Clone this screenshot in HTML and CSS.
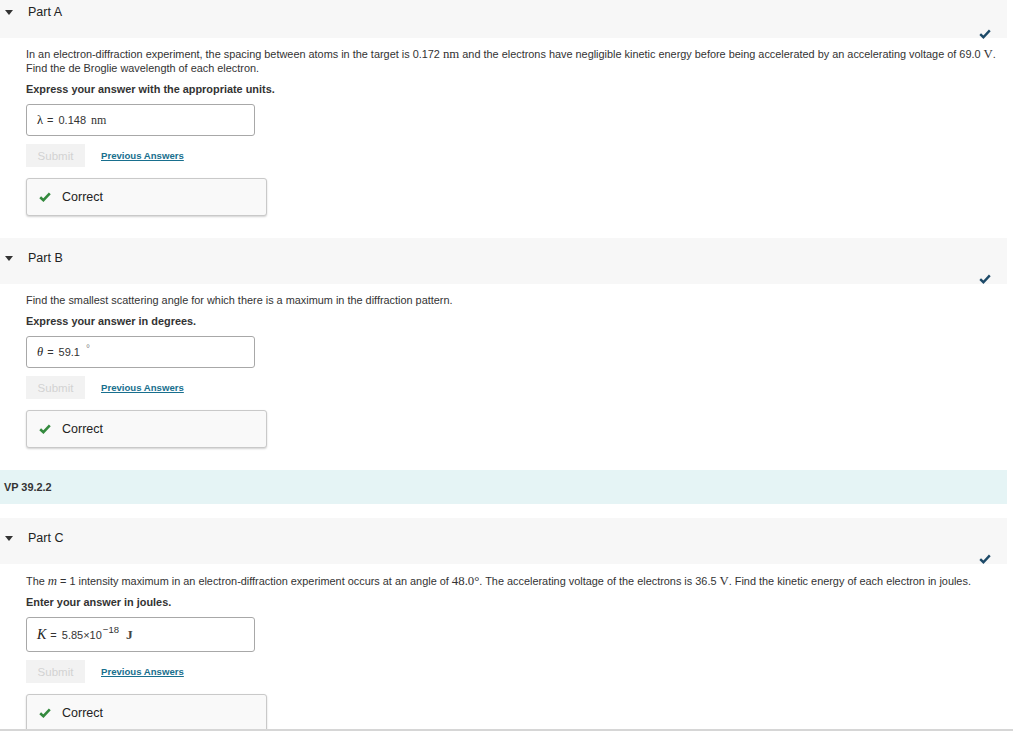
FILE: index.html
```html
<!DOCTYPE html>
<html>
<head>
<meta charset="utf-8">
<link rel="stylesheet" href="styles.css">
</head>
<body>
<div class="page">

  <section class="part part-first">
    <div class="part-head">
      <span class="caret"></span>
      <span class="part-title">Part A</span>
      <svg class="done" viewBox="0 0 12 10" width="12" height="10"><path d="M1.2 5.2 L4.4 8.2 L10.8 1.4" fill="none" stroke="#1d4a68" stroke-width="2.4"/></svg>
    </div>
    <div class="part-body">
      <p class="prompt">In an electron-diffraction experiment, the spacing between atoms in the target is 0.172 <span class="mj">nm</span> and the electrons have negligible kinetic energy before being accelerated by an accelerating voltage of 69.0 <span class="mj">V</span>.<br>Find the de Broglie wavelength of each electron.</p>
      <p class="instr">Express your answer with the appropriate units.</p>
      <div class="answer"><span class="mj sym">λ</span><span class="eq">=</span><span class="val">0.148</span><span class="mj unit">nm</span></div>
      <div class="actions"><span class="submit">Submit</span><a class="prev" href="#">Previous Answers</a></div>
      <div class="feedback"><svg class="ok" viewBox="0 0 12 10" width="12" height="10"><path d="M1.2 5.2 L4.4 8.2 L10.8 1.4" fill="none" stroke="#348a3e" stroke-width="2.6"/></svg><span>Correct</span></div>
    </div>
  </section>

  <section class="part">
    <div class="part-head">
      <span class="caret"></span>
      <span class="part-title">Part B</span>
      <svg class="done" viewBox="0 0 12 10" width="12" height="10"><path d="M1.2 5.2 L4.4 8.2 L10.8 1.4" fill="none" stroke="#1d4a68" stroke-width="2.4"/></svg>
    </div>
    <div class="part-body">
      <p class="prompt">Find the smallest scattering angle for which there is a maximum in the diffraction pattern.</p>
      <p class="instr">Express your answer in degrees.</p>
      <div class="answer"><span class="mj sym it">θ</span><span class="eq">=</span><span class="val">59.1</span><span class="deg">°</span></div>
      <div class="actions"><span class="submit">Submit</span><a class="prev" href="#">Previous Answers</a></div>
      <div class="feedback"><svg class="ok" viewBox="0 0 12 10" width="12" height="10"><path d="M1.2 5.2 L4.4 8.2 L10.8 1.4" fill="none" stroke="#348a3e" stroke-width="2.6"/></svg><span>Correct</span></div>
    </div>
  </section>

  <div class="vp">VP 39.2.2</div>

  <section class="part">
    <div class="part-head">
      <span class="caret"></span>
      <span class="part-title">Part C</span>
      <svg class="done" viewBox="0 0 12 10" width="12" height="10"><path d="M1.2 5.2 L4.4 8.2 L10.8 1.4" fill="none" stroke="#1d4a68" stroke-width="2.4"/></svg>
    </div>
    <div class="part-body">
      <p class="prompt prompt-math">The <span class="mj it">m</span> = 1 intensity maximum in an electron-diffraction experiment occurs at an angle of <span class="mj">48.0°</span>. The accelerating voltage of the electrons is 36.5 <span class="mj">V</span>. Find the kinetic energy of each electron in joules.</p>
      <p class="instr instr-tight">Enter your answer in joules.</p>
      <div class="answer answer-tall"><span class="mj sym it big">K</span><span class="eq">=</span><span class="val">5.85×10<sup>−18</sup></span><span class="mj unit unit-j">J</span></div>
      <div class="actions"><span class="submit">Submit</span><a class="prev" href="#">Previous Answers</a></div>
      <div class="feedback"><svg class="ok" viewBox="0 0 12 10" width="12" height="10"><path d="M1.2 5.2 L4.4 8.2 L10.8 1.4" fill="none" stroke="#348a3e" stroke-width="2.6"/></svg><span>Correct</span></div>
    </div>
  </section>

</div>
<div class="bottom-rule"></div>
</body>
</html>
```
FILE: styles.css
```css
html, body {
  margin: 0;
  padding: 0;
  background: #ffffff;
}
body {
  font-family: "Liberation Sans", Arial, sans-serif;
  color: #333333;
  overflow: hidden;
}
.page {
  width: 1007px;
}
.part {
  margin-bottom: 22px;
}
.part-first {
  margin-top: -8px;
}
.part-first .done {
  bottom: -1px;
}
.part-head {
  position: relative;
  height: 46px;
  background: #f7f7f7;
  display: flex;
  align-items: flex-start;
  padding-top: 12px;
  box-sizing: border-box;
}
.caret {
  width: 0;
  height: 0;
  margin: 6px 0 0 5px;
  border-left: 4px solid transparent;
  border-right: 4px solid transparent;
  border-top: 5px solid #333333;
}
.part-title {
  margin-left: 15px;
  font-size: 12.5px;
  line-height: 16px;
  color: #222222;
}
.done {
  position: absolute;
  right: 16px;
  bottom: 0;
}
.part-body {
  padding-left: 26px;
}
.prompt {
  margin: 9px 0 0 0;
  font-size: 10.9px;
  line-height: 14px;
  color: #333333;
}
.prompt-math {
  line-height: 16px;
}
.instr {
  margin: 7px 0 0 0;
  font-size: 10.9px;
  line-height: 14px;
  font-weight: bold;
  color: #333333;
}
.instr-tight {
  margin-top: 6px;
}
.mj {
  font-family: "Liberation Serif", "Times New Roman", serif;
  font-size: 12.8px;
}
.it {
  font-style: italic;
}
.answer {
  margin-top: 8px;
  width: 229px;
  height: 32px;
  box-sizing: border-box;
  border: 1px solid #a8a8a8;
  border-radius: 3px;
  display: flex;
  align-items: center;
  padding-left: 10px;
  font-size: 11px;
  color: #333333;
}
.answer-tall {
  height: 35px;
}
.sym {
  font-size: 12.5px;
  color: #222222;
}
.sym.big {
  font-size: 14px;
}
.eq {
  margin: 0 5px 0 4px;
}
.val {
  font-size: 11px;
}
.val sup {
  font-size: 9.5px;
  vertical-align: 6px;
  line-height: 0;
  margin-left: 1px;
}
.unit {
  margin-left: 5px;
  font-size: 12px;
}
.unit-j {
  margin-left: 7px;
  font-size: 13.5px;
  font-weight: bold;
  color: #444444;
}
.deg {
  margin-left: 6px;
  font-size: 10px;
  color: #8a8a8a;
  align-self: flex-start;
  margin-top: 6px;
}
.actions {
  margin-top: 8px;
  display: flex;
  align-items: center;
  height: 23px;
}
.submit {
  width: 59px;
  height: 23px;
  background: #f2f2f2;
  color: #d2d2d2;
  font-size: 11.5px;
  display: flex;
  align-items: center;
  justify-content: center;
}
.prev {
  margin-left: 16px;
  font-size: 9.6px;
  font-weight: bold;
  color: #186f8e;
  text-decoration: underline;
}
.feedback {
  margin-top: 11px;
  width: 241px;
  height: 38px;
  box-sizing: border-box;
  border: 1px solid #c9c9c9;
  border-radius: 3px;
  background: #f9f9f9;
  box-shadow: 0 1px 2px rgba(0, 0, 0, 0.18);
  display: flex;
  align-items: center;
  padding-left: 12px;
  font-size: 12.5px;
  color: #222222;
}
.ok {
  margin-right: 11px;
}
.vp {
  height: 34px;
  background: #e5f4f5;
  display: flex;
  align-items: center;
  padding-left: 4px;
  font-size: 10.9px;
  font-weight: bold;
  color: #333333;
  margin-bottom: 14px;
}
.bottom-rule {
  position: fixed;
  left: 0;
  bottom: 0;
  width: 1013px;
  height: 2px;
  background: #d6d6d6;
}
```
